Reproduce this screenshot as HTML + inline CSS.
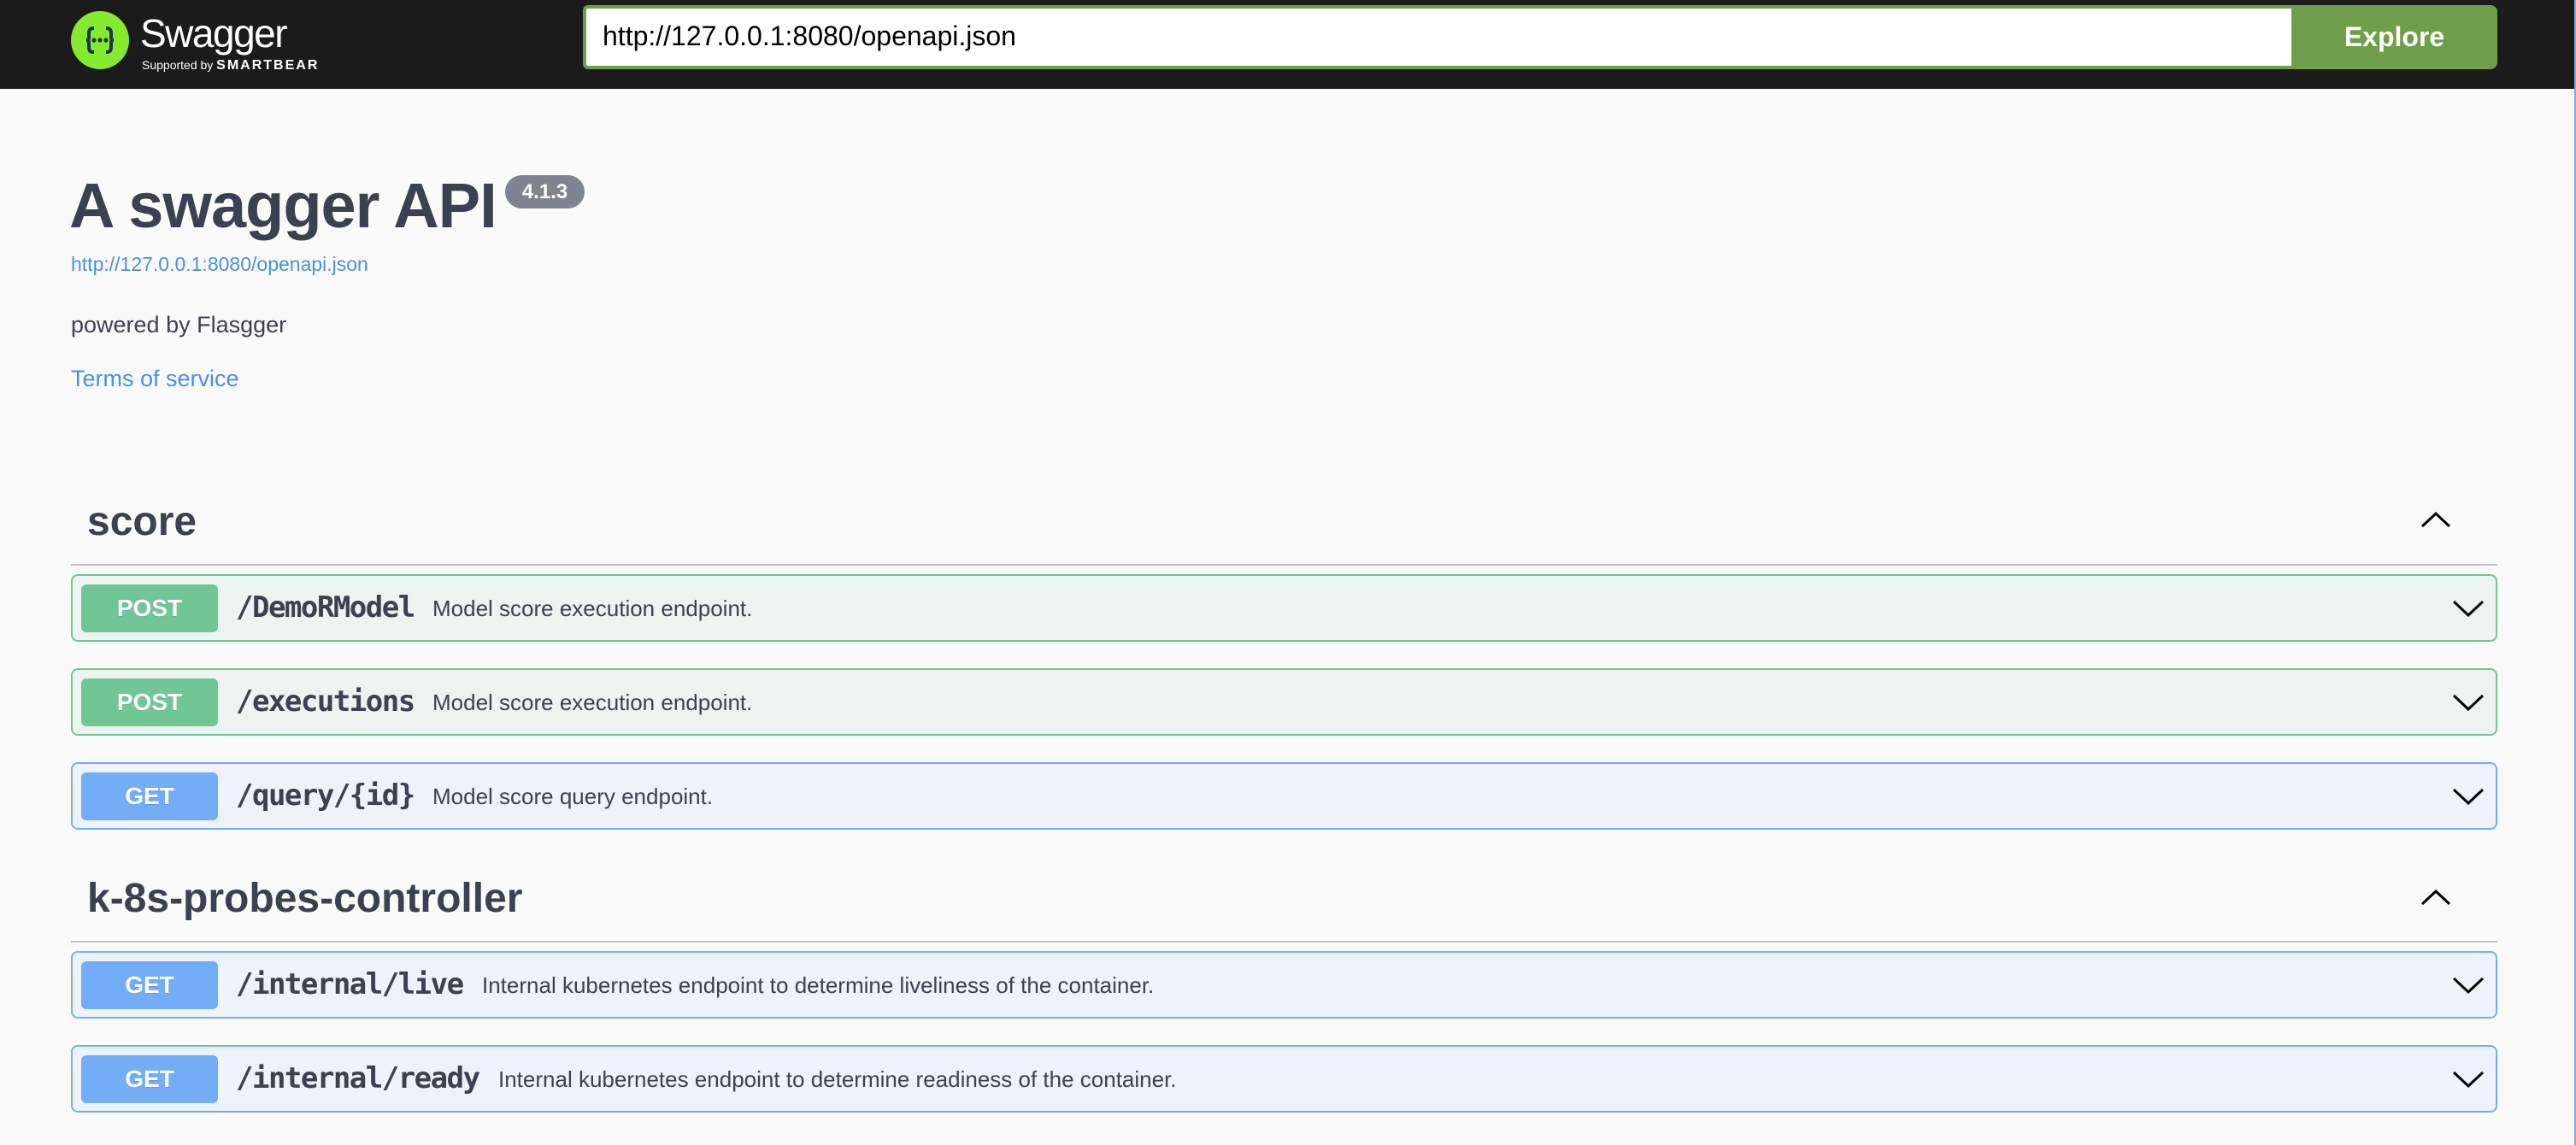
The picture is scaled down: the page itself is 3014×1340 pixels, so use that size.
<!DOCTYPE html>
<html><head><meta charset="utf-8">
<style>
*{margin:0;padding:0;box-sizing:border-box}
body{width:3014px;height:1340px;background:#fafafa;font-family:"Liberation Sans",Arial,sans-serif;position:relative;overflow:hidden;color:#3b4151}
.a{position:absolute;white-space:nowrap}
.hdr{left:0;top:0;width:3012px;height:104px;background:#1b1b1b}
.rb{position:absolute;right:0;top:0;width:2px;height:1340px;background:#8fa6d8}
.row{position:absolute;left:83px;width:2839px;height:79px;border:2px solid;border-radius:8px}
.post{background:#ecf4ef;border-color:#70c795}
.get{background:#edf3fb;border-color:#73adf5}
.bd{position:absolute;left:10px;top:10px;width:160px;height:56px;border-radius:6px;color:#fff;font-weight:bold;font-size:28px;line-height:56px;text-align:center;text-shadow:0 1px 0 rgba(0,0,0,.1)}
.post .bd{background:#70c795}.get .bd{background:#73adf5}
.pt{position:absolute;left:191px;top:0;line-height:75px;font-family:"DejaVu Sans Mono","Liberation Mono",monospace;font-weight:bold;font-size:34px;color:#3b4151;letter-spacing:-1.5px}
.ds{position:absolute;top:0;line-height:76px;font-size:26px;color:#3b4151}
.ch{position:absolute;right:14px;top:28px}
.tag{font-weight:bold;font-size:48px;color:#3b4151}
.ln{left:83px;width:2839px;height:2px;background:#c4c4c8}
</style></head><body>
<div class="a hdr"></div>
<div class="rb"></div>
<svg class="a" style="left:83px;top:13px" width="68" height="68" viewBox="0 0 68 68"><circle cx="34" cy="34" r="34" fill="#85ea2d"/>
<path d="M27 20c-5 0-6 2-6 6v5c0 2-1 3-3 3 2 0 3 1 3 3v5c0 4 1 6 6 6M41 20c5 0 6 2 6 6v5c0 2 1 3 3 3-2 0-3 1-3 3v5c0 4-1 6-6 6" stroke="#173647" stroke-width="4" fill="none"/>
<circle cx="27" cy="34" r="2.6" fill="#173647"/><circle cx="34" cy="34" r="2.6" fill="#173647"/><circle cx="41" cy="34" r="2.6" fill="#173647"/></svg>
<div class="a" style="left:164px;top:12px;font-size:46px;color:#fff;letter-spacing:-1.5px">Swagger</div>
<div class="a" style="left:166px;top:68px;font-size:14px;color:#fff">Supported by <b style="font-size:16px;letter-spacing:2px">SMARTBEAR</b></div>
<div class="a" style="left:682px;top:6px;width:2010px;height:75px;background:#fff;border:4px solid #6f9e4b;border-radius:6px 0 0 6px"></div>
<div class="a" style="left:705px;top:24px;font-size:32px;color:#000">http://127.0.0.1:8080/openapi.json</div>
<div class="a" style="left:2681px;top:6px;width:241px;height:75px;background:#6f9e4b;border-radius:0 8px 8px 0;color:#fff;font-weight:bold;font-size:32px;line-height:75px;text-align:center">Explore</div>

<div class="a" style="left:81px;top:198px;font-size:74px;font-weight:bold;color:#3b4151;letter-spacing:-1px">A swagger API</div>
<div class="a" style="left:591px;top:205px;width:93px;height:39px;border-radius:20px;background:#7d8492;color:#fff;font-weight:bold;font-size:24px;line-height:39px;text-align:center">4.1.3</div>
<div class="a" style="left:83px;top:296px;font-size:23px;color:#4990e2">http://127.0.0.1:8080/openapi.json</div>
<div class="a" style="left:83px;top:365px;font-size:27px;color:#3b4151">powered by Flasgger</div>
<div class="a" style="left:83px;top:428px;font-size:27px;color:#4990e2">Terms of service</div>

<div class="a tag" style="left:102px;top:583px">score</div>
<svg class="a" style="left:2833px;top:598px" width="34" height="20" viewBox="0 0 34 20"><path d="M1 18L17 3L33 18" stroke="#000" stroke-width="3" fill="none"/></svg>
<div class="a ln" style="top:660px"></div>

<div class="row post" style="top:672px"><div class="bd">POST</div><div class="pt">/DemoRModel</div><div class="ds" style="left:421px">Model score execution endpoint.</div><svg class="ch" width="36" height="20" viewBox="0 0 36 20"><path d="M1 2L18 18L35 2" stroke="#000" stroke-width="3" fill="none"/></svg></div>
<div class="row post" style="top:782px"><div class="bd">POST</div><div class="pt">/executions</div><div class="ds" style="left:421px">Model score execution endpoint.</div><svg class="ch" width="36" height="20" viewBox="0 0 36 20"><path d="M1 2L18 18L35 2" stroke="#000" stroke-width="3" fill="none"/></svg></div>
<div class="row get" style="top:892px"><div class="bd">GET</div><div class="pt">/query/{id}</div><div class="ds" style="left:421px">Model score query endpoint.</div><svg class="ch" width="36" height="20" viewBox="0 0 36 20"><path d="M1 2L18 18L35 2" stroke="#000" stroke-width="3" fill="none"/></svg></div>

<div class="a tag" style="left:102px;top:1024px">k-8s-probes-controller</div>
<svg class="a" style="left:2833px;top:1040px" width="34" height="20" viewBox="0 0 34 20"><path d="M1 18L17 3L33 18" stroke="#000" stroke-width="3" fill="none"/></svg>
<div class="a ln" style="top:1101px"></div>

<div class="row get" style="top:1113px"><div class="bd">GET</div><div class="pt">/internal/live</div><div class="ds" style="left:479px">Internal kubernetes endpoint to determine liveliness of the container.</div><svg class="ch" width="36" height="20" viewBox="0 0 36 20"><path d="M1 2L18 18L35 2" stroke="#000" stroke-width="3" fill="none"/></svg></div>
<div class="row get" style="top:1223px"><div class="bd">GET</div><div class="pt">/internal/ready</div><div class="ds" style="left:498px">Internal kubernetes endpoint to determine readiness of the container.</div><svg class="ch" width="36" height="20" viewBox="0 0 36 20"><path d="M1 2L18 18L35 2" stroke="#000" stroke-width="3" fill="none"/></svg></div>
</body></html>
